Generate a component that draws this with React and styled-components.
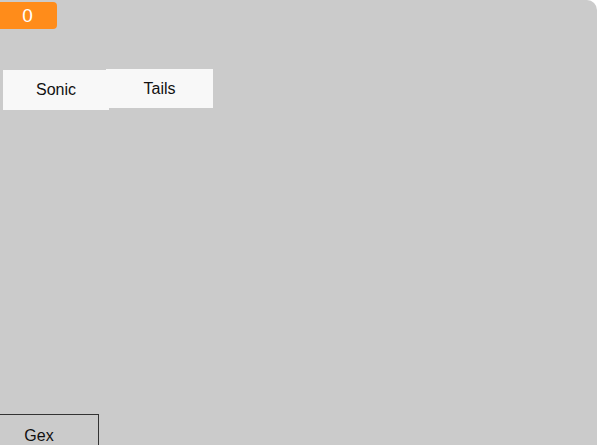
import React from "react";
import styled, { createGlobalStyle } from "styled-components";

const Global = createGlobalStyle`
  html, body { margin: 0; padding: 0; background: #ffffff; overflow: hidden; }
  body { font-family: "Liberation Sans", Arial, sans-serif; }
`;

const Stage = styled.div`
  position: relative;
  width: 597px;
  height: 445px;
  background: #cbcbcb;
  border-top-right-radius: 10px;
  display: flex;
  flex-direction: column;
  overflow: hidden;
`;

const Score = styled.div`
  margin-top: 2px;
  margin-left: -4px;
  width: 61px;
  height: 27px;
  background: #ff8c1a;
  border-radius: 4px;
  color: #ffffff;
  font-size: 19px;
  line-height: 27px;
  text-align: center;
  padding-left: 2px;
  box-sizing: border-box;
`;

const Tabs = styled.div`
  display: flex;
  align-items: flex-start;
  margin-top: 40px;
  padding-left: 3px;
`;

const Tab = styled.div`
  width: ${(p) => p.$w}px;
  height: ${(p) => p.$h}px;
  margin-top: ${(p) => p.$top || 0}px;
  margin-left: ${(p) => p.$left || 0}px;
  background: #f8f8f8;
  color: #111;
  font-size: 16px;
  display: flex;
  align-items: center;
  justify-content: center;
`;

const Footer = styled.div`
  margin-top: auto;
  margin-left: -21px;
  margin-bottom: -10px;
  width: 120px;
  height: 41px;
  border: 1px solid #333;
  color: #111;
  font-size: 16px;
  line-height: 18px;
  display: flex;
  justify-content: center;
  padding-top: 12px;
  box-sizing: border-box;
`;

export default function App() {
  return (
    <>
      <Global />
      <Stage>
        <Score>0</Score>
        <Tabs>
          <Tab $w={106} $h={40} $top={1}>Sonic</Tab>
          <Tab $w={107} $h={39} $left={-3}>Tails</Tab>
        </Tabs>
        <Footer>Gex</Footer>
      </Stage>
    </>
  );
}
